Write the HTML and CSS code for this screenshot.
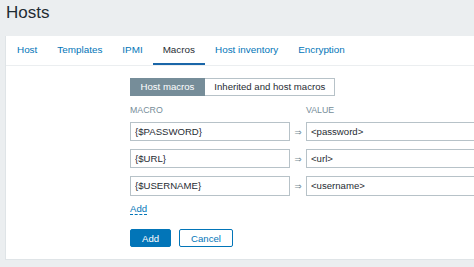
FILE: index.html
```html
<!DOCTYPE html>
<html lang="en">
<head>
    <meta charset="UTF-8">
    <meta name="viewport" content="width=device-width, initial-scale=1.0">
    <title>Hosts</title>
    <link rel="stylesheet" href="styles.css">
</head>
<body>
    <header class="page-title">
        <h1>Hosts</h1>
    </header>

    <div class="panel">
        <ul class="tabs">
            <li><a href="#">Host</a></li>
            <li><a href="#">Templates</a></li>
            <li><a href="#">IPMI</a></li>
            <li class="active"><a href="#">Macros</a></li>
            <li><a href="#">Host inventory</a></li>
            <li><a href="#">Encryption</a></li>
        </ul>

        <form class="macros-form" onsubmit="return false">
            <div class="segmented">
                <span class="seg active">Host macros</span>
                <span class="seg">Inherited and host macros</span>
            </div>

            <div class="macro-head">
                <span class="col-macro">Macro</span>
                <span class="col-value">Value</span>
            </div>

            <div class="macro-rows">
                <div class="macro-row">
                    <input type="text" class="macro-input" value="{$PASSWORD}">
                    <span class="arrow">&rArr;</span>
                    <input type="text" class="value-input" value="&lt;password&gt;">
                </div>
                <div class="macro-row">
                    <input type="text" class="macro-input" value="{$URL}">
                    <span class="arrow">&rArr;</span>
                    <input type="text" class="value-input" value="&lt;url&gt;">
                </div>
                <div class="macro-row">
                    <input type="text" class="macro-input" value="{$USERNAME}">
                    <span class="arrow">&rArr;</span>
                    <input type="text" class="value-input" value="&lt;username&gt;">
                </div>
            </div>

            <a href="#" class="link-action">Add</a>

            <div class="form-buttons">
                <button class="btn-primary">Add</button>
                <button class="btn-alt">Cancel</button>
            </div>
        </form>
    </div>
</body>
</html>
```

FILE: styles.css
```css
:root {
    --page-bg: #ebeef0;
    --text: #1f2c33;
    --link: #0275b8;
    --muted: #768d99;
    --field-border: #b7c2c8;
}
html, body {
    overflow: hidden;
}
body {
    font-family: 'Liberation Sans', Arial, sans-serif;
    font-size: 9.6px;
    margin: 0;
    padding: 0;
    background-color: var(--page-bg);
    color: var(--text);
}
.page-title {
    height: 36px;
    box-sizing: border-box;
    padding: 3px 0 0 6px;
}
.page-title h1 {
    margin: 0;
    font-size: 17px;
    line-height: 20px;
    font-weight: normal;
    color: var(--text);
}
.panel {
    margin-left: 5px;
    background: white;
    border-left: 1px solid #dfe4e7;
    border-bottom: 1px solid #dfe4e7;
    overflow: hidden;
}

/* tabs */
.tabs {
    display: flex;
    list-style: none;
    margin: 0;
    padding: 0 0 0 1px;
    height: 29px;
    border-bottom: 1px solid var(--page-bg);
}
.tabs a {
    display: block;
    box-sizing: border-box;
    height: 29px;
    padding: 7px 10px 0;
    line-height: 14px;
    font-size: 9.9px;
    color: var(--link);
    text-decoration: none;
    border-bottom: 2.4px solid transparent;
}
.tabs .active a {
    color: var(--text);
    border-bottom-color: #1a66a8;
}

/* form */
.macros-form {
    padding: 12px 0 12px 124px;
}
.segmented {
    display: flex;
    height: 17.5px;
    margin-bottom: 8px;
}
.seg {
    box-sizing: border-box;
    height: 17.5px;
    line-height: 15.5px;
    padding: 0 9.5px;
    border: 1px solid var(--field-border);
    background: white;
    color: var(--text);
}
.seg.active {
    background: var(--muted);
    border-color: var(--muted);
    color: white;
}
.seg + .seg {
    border-left: none;
    padding: 0 9px 0 9.5px;
}
.macro-head {
    display: flex;
    height: 12px;
    line-height: 12px;
    margin-bottom: 6.5px;
    font-size: 8.8px;
    text-transform: uppercase;
    color: var(--muted);
}
.col-macro {
    width: 176px;
    flex: none;
}
.macro-rows {
    display: flex;
    flex-direction: column;
    gap: 8px;
}
.macro-row {
    display: flex;
    align-items: center;
    height: 19.2px;
}
.macro-row input {
    box-sizing: border-box;
    flex: none;
    height: 19.2px;
    margin: 0;
    padding: 0 4px;
    border: 1px solid var(--field-border);
    font-family: inherit;
    font-size: 9.6px;
    color: var(--text);
    background: white;
    outline: none;
}
.macro-input {
    width: 160px;
}
.value-input {
    width: 240px;
}
.arrow {
    flex: none;
    width: 16px;
    text-align: center;
    font-family: 'DejaVu Sans', sans-serif;
    font-size: 8.5px;
    color: var(--muted);
}
.link-action {
    display: inline-block;
    margin-top: 7.5px;
    line-height: 11px;
    color: var(--link);
    text-decoration: none;
    border-bottom: 1px dashed var(--link);
}
.form-buttons {
    display: flex;
    gap: 8px;
    margin-top: 14px;
}
.form-buttons button {
    box-sizing: border-box;
    height: 18.4px;
    padding: 0 11px;
    font-family: inherit;
    font-size: 9.6px;
    border: 1px solid var(--link);
    border-radius: 2px;
    cursor: pointer;
}
.btn-primary {
    background: var(--link);
    color: white;
}
.btn-alt {
    background: white;
    color: var(--link);
}
```
